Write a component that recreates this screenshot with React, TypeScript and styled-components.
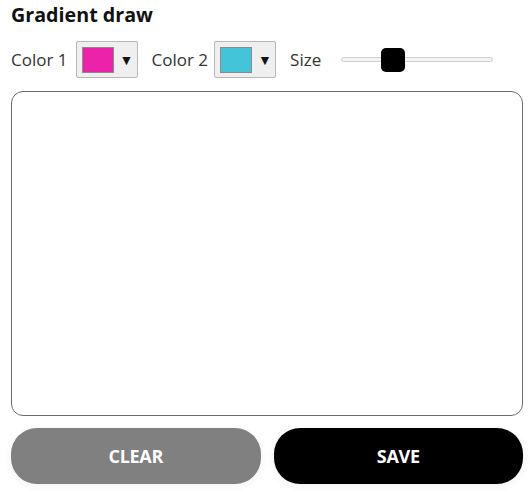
import React, { useState } from "react";
import styled, { createGlobalStyle } from "styled-components";

const Global = createGlobalStyle`
  html, body { margin: 0; padding: 0; background: #ffffff; }
  body { font-family: "Open Sans", "Liberation Sans", sans-serif; color: #222; }
  * { box-sizing: border-box; }
`;

const Page = styled.div`
  width: 530px;
  padding: 2px 7px 8px 11px;
  display: flex;
  flex-direction: column;
`;

const Title = styled.h2`
  margin: 0;
  font-size: 19.7px;
  font-weight: 700;
  line-height: 26px;
  color: #111;
`;

const Controls = styled.div`
  display: flex;
  align-items: center;
  height: 37px;
  margin-top: 13px;
`;

const Label = styled.span<{ $gap: number }>`
  font-size: 17px;
  color: #333;
  margin-right: ${(p) => p.$gap}px;
  line-height: 1;
`;

const Picker = styled.div<{ $after: number }>`
  width: 62px;
  height: 37px;
  border: 1px solid #b8b8b8;
  border-radius: 2px;
  background: #efefef;
  display: flex;
  align-items: center;
  padding-left: 5px;
  margin-right: ${(p) => p.$after}px;
`;

const Swatch = styled.div<{ $color: string }>`
  width: 32px;
  height: 26px;
  border: 1px solid #8a8a8a;
  background: ${(p) => p.$color};
`;

const Arrow = styled.span`
  font-size: 14px;
  color: #111;
  margin-left: 6px;
  line-height: 1;
`;

const SliderWrap = styled.div`
  position: relative;
  width: 152px;
  height: 24px;
  margin-left: 20px;
  display: flex;
  align-items: center;
`;

const Track = styled.div`
  width: 100%;
  height: 5px;
  border: 1px solid #cfcfcf;
  border-radius: 3px;
  background: #f4f4f4;
`;

const Thumb = styled.div`
  position: absolute;
  top: 0;
  width: 24px;
  height: 24px;
  border-radius: 5px;
  background: #000;
`;

const Canvas = styled.div`
  margin-top: 13px;
  height: 325px;
  border: 1px solid #6b6b6b;
  border-radius: 12px;
  background: #fff;
`;

const Buttons = styled.div`
  margin-top: 12px;
  display: grid;
  grid-template-columns: 1fr 1fr;
  gap: 13px;
`;

const Button = styled.button<{ $dark?: boolean }>`
  height: 56px;
  border: none;
  border-radius: 26px;
  background: ${(p) => (p.$dark ? "#000" : "#808080")};
  color: #fff;
  font-family: "Open Sans", "Liberation Sans", sans-serif;
  font-size: 18px;
  font-weight: 700;
  letter-spacing: -0.3px;
  box-shadow: 0 2px 10px rgba(40, 40, 120, 0.06);
  cursor: pointer;
`;

export default function App() {
  const [size] = useState(0.31);
  return (
    <>
      <Global />
      <Page>
        <Title>Gradient draw</Title>
        <Controls>
          <Label $gap={8}>Color 1</Label>
          <Picker $after={14}>
            <Swatch $color="#ec22aa" />
            <Arrow>▼</Arrow>
          </Picker>
          <Label $gap={6}>Color 2</Label>
          <Picker $after={14}>
            <Swatch $color="#44c4d8" />
            <Arrow>▼</Arrow>
          </Picker>
          <Label $gap={0}>Size</Label>
          <SliderWrap>
            <Track />
            <Thumb style={{ left: `${size * 128}px` }} />
          </SliderWrap>
        </Controls>
        <Canvas />
        <Buttons>
          <Button>CLEAR</Button>
          <Button $dark>SAVE</Button>
        </Buttons>
      </Page>
    </>
  );
}
